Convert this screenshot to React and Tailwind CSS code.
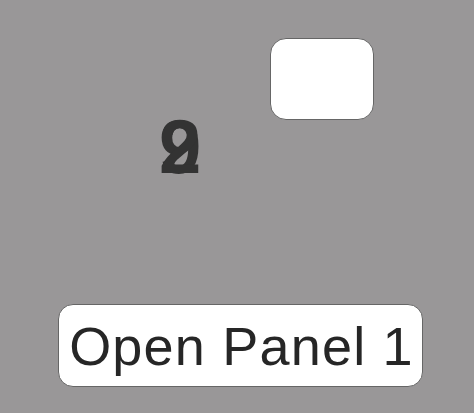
export default function App() {
  return (
    <div
      className="w-[474px] h-[413px] bg-[#999798] flex flex-col overflow-hidden"
      style={{ fontFamily: '"Liberation Sans", Arial, sans-serif' }}
    >
      <div className="ml-[270px] mt-[38px] w-[104px] h-[82px] bg-white rounded-[16px] border-[1.5px] border-[#666666]" />
      <div className="ml-[159px] mt-[-11px] grid text-[76px] leading-none font-bold text-[#333333]">
        <span className="col-start-1 row-start-1">9</span>
        <span className="col-start-1 row-start-1">2</span>
      </div>
      <div className="ml-[58px] mt-[119px] w-[365px] h-[83px] bg-white rounded-[15px] border-[1.5px] border-[#666666] flex items-center justify-center">
        <span className="text-[54px] leading-none text-[#262626] tracking-[1.2px] pl-[2px]">Open Panel 1</span>
      </div>
    </div>
  );
}
